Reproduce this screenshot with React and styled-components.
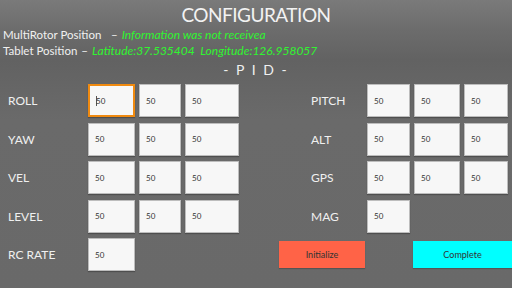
import React from "react";
import styled, { createGlobalStyle } from "styled-components";

const GlobalStyle = createGlobalStyle`
  html, body {
    margin: 0;
    padding: 0;
  }
  body {
    width: 512px;
    height: 288px;
    overflow: hidden;
    font-family: "Lato", "Open Sans", sans-serif;
    background: linear-gradient(180deg, #7a7a7a 0px, #6c6c6c 30px, #626262 60px, #6a6a6a 120px, #696969 288px);
  }
`;

const leftRows = [
  { name: "ROLL", values: ["50", "50", "50"], focus: 0 },
  { name: "YAW", values: ["50", "50", "50"] },
  { name: "VEL", values: ["50", "50", "50"] },
  { name: "LEVEL", values: ["50", "50", "50"] },
  { name: "RC RATE", values: ["50"] },
];

const rightRows = [
  { name: "PITCH", values: ["50", "50", "50"] },
  { name: "ALT", values: ["50", "50", "50"] },
  { name: "GPS", values: ["50", "50", "50"] },
  { name: "MAG", values: ["50"] },
];

function PidRow({ row }) {
  return (
    <>
      <Label>{row.name}</Label>
      {row.values.map((v, idx) => (
        <ValueBox key={idx} $focused={row.focus === idx}>
          {row.focus === idx && <Caret />}
          {v}
        </ValueBox>
      ))}
      {row.values.length === 1 && <Filler />}
    </>
  );
}

function App() {
  return (
    <Screen>
      <GlobalStyle />
      <Title>CONFIGURATION</Title>
      <InfoLine>
        <Name $width="104px">MultiRotor Position</Name>
        <Dash>–</Dash>
        <Status>Information was not receivea</Status>
      </InfoLine>
      <InfoLine>
        <Name>Tablet Position</Name>
        <Dash>–</Dash>
        <Status>Latitude:37.535404&nbsp; Longitude:126.958057</Status>
      </InfoLine>
      <Heading>- P I D -</Heading>
      <Panels>
        <LeftGrid>
          {leftRows.map((row) => (
            <PidRow key={row.name} row={row} />
          ))}
        </LeftGrid>
        <RightSide>
          <RightGrid>
            {rightRows.map((row) => (
              <PidRow key={row.name} row={row} />
            ))}
          </RightGrid>
          <Buttons>
            <ActionButton $bg="#ff6347" $width="86px">Initialize</ActionButton>
            <ActionButton $bg="#00ffff" $width="99px">Complete</ActionButton>
          </Buttons>
        </RightSide>
      </Panels>
    </Screen>
  );
}

const Screen = styled.div`
  width: 512px;
  height: 288px;
  display: flex;
  flex-direction: column;
  color: #f0f0f0;
`;

const Title = styled.h1`
  margin: 3px 0 0;
  text-align: center;
  font-size: 19px;
  font-weight: 400;
  line-height: 24px;
  letter-spacing: -0.5px;
  color: #f2f2f2;
`;

const InfoLine = styled.div`
  display: flex;
  align-items: baseline;
  margin-left: 3px;
  font-size: 11.5px;
  line-height: 16px;
  white-space: nowrap;
  color: #f0f0f0;
`;

const Name = styled.span`
  display: inline-block;
  width: ${(p) => p.$width || "auto"};
  margin-right: 4px;
`;

const Dash = styled.span`
  margin-right: 4px;
`;

const Status = styled.span`
  font-style: italic;
  font-size: 12px;
  color: #30f530;
`;

const Heading = styled.div`
  text-align: center;
  font-size: 14px;
  line-height: 16px;
  margin-top: 3px;
  letter-spacing: 2px;
  color: #f0f0f0;
`;

const Panels = styled.div`
  display: flex;
  margin-top: 6px;
`;

const LeftGrid = styled.div`
  display: grid;
  grid-template-columns: 76px 47px 42px 54px;
  grid-auto-rows: 33px;
  column-gap: 4px;
  row-gap: 5.5px;
  padding-left: 8px;
  width: 271px;
`;

const RightSide = styled.div`
  display: flex;
  flex-direction: column;
  width: 233px;
`;

const RightGrid = styled.div`
  display: grid;
  grid-template-columns: 84px 43px 46px 44px;
  grid-auto-rows: 33px;
  column-gap: 4px;
  row-gap: 5.5px;
`;

const Label = styled.div`
  display: flex;
  align-items: center;
  font-size: 12px;
  color: #f0f0f0;
  ${RightGrid} & {
    padding-left: 32px;
  }
`;

const ValueBox = styled.div`
  position: relative;
  display: flex;
  align-items: center;
  padding-left: 6px;
  font-size: 8px;
  color: #333;
  background: #f7f7f7;
  box-sizing: border-box;
  border: ${(p) => (p.$focused ? "2px solid #f08a10" : "1px solid #bdbdbd")};
  box-shadow: 0 1px 1px rgba(0, 0, 0, 0.25);
`;

const Caret = styled.span`
  display: inline-block;
  width: 1px;
  height: 10px;
  margin-right: -1px;
  background: #555;
`;

const Filler = styled.div`
  grid-column: span 2;
`;

const Buttons = styled.div`
  display: flex;
  justify-content: space-between;
  margin-top: 8.5px;
`;

const ActionButton = styled.button`
  width: ${(p) => p.$width};
  height: 27px;
  border: none;
  padding: 0;
  background: ${(p) => p.$bg};
  font-family: inherit;
  font-size: 9px;
  color: #333;
  box-shadow: 0 1px 1px rgba(0, 0, 0, 0.2);
`;

export default App;
